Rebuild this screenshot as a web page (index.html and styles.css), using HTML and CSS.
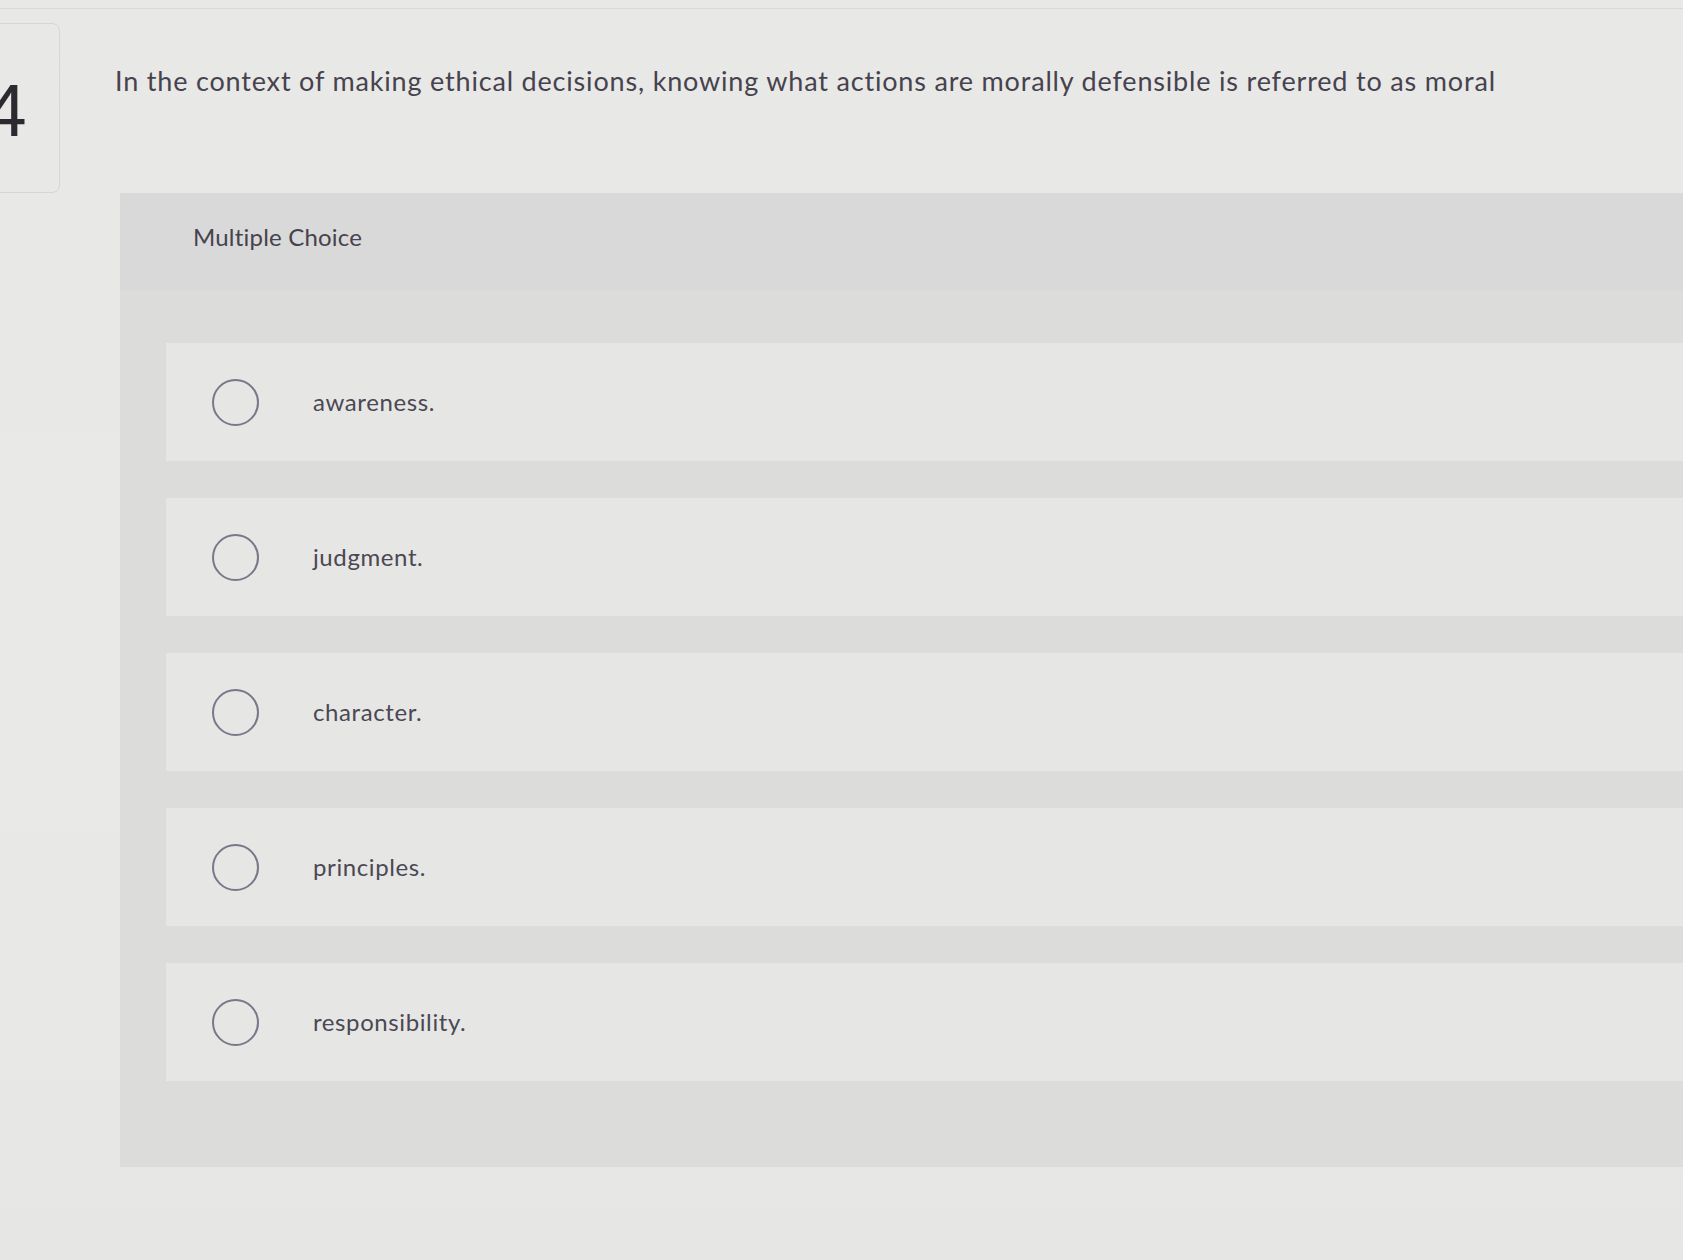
FILE: index.html
```html
<!DOCTYPE html>
<html lang="en">
<head>
<meta charset="utf-8">
<title>Question 4</title>
<link rel="stylesheet" href="styles.css">
</head>
<body>
<div class="page">
  <div class="question">
    <div class="qnum"><span>4</span></div>
    <p class="prompt">In the context of making ethical decisions, knowing what actions are morally defensible is referred to as moral</p>
  </div>
  <section class="panel">
    <header class="panel-head">Multiple Choice</header>
    <ul class="options">
      <li class="option"><span class="radio"></span><span class="label">awareness.</span></li>
      <li class="option"><span class="radio"></span><span class="label">judgment.</span></li>
      <li class="option"><span class="radio"></span><span class="label">character.</span></li>
      <li class="option"><span class="radio"></span><span class="label">principles.</span></li>
      <li class="option"><span class="radio"></span><span class="label">responsibility.</span></li>
    </ul>
  </section>
</div>
</body>
</html>
```

FILE: styles.css
```css
html, body {
  margin: 0;
  padding: 0;
}
body {
  width: 1683px;
  height: 1260px;
  overflow: hidden;
  background: linear-gradient(180deg, #e8e8e6 0%, #e9e9e7 60%, #e6e6e4 100%);
  font-family: Lato, "Open Sans", "Liberation Sans", sans-serif;
  color: #48444f;
}
.page {
  padding-top: 10px;
  border-top: 1px solid #d9d9d7;
  margin-top: 8px;
}
.question {
  display: flex;
  align-items: flex-start;
  height: 174px;
}
.qnum {
  width: 84px;
  height: 170px;
  margin-left: -24px;
  margin-top: 4px;
  box-sizing: border-box;
  border: 1px solid #d6d6d4;
  border-radius: 8px;
  display: flex;
  align-items: center;
  justify-content: center;
  flex-shrink: 0;
}
.qnum span {
  font-family: "Liberation Sans", sans-serif;
  font-size: 74px;
  line-height: 1;
  color: #2c2a30;
  margin-left: -24px;
  margin-top: 6px;
}
.prompt {
  margin: 46px 0 0 55px;
  font-size: 27px;
  line-height: 32px;
  letter-spacing: 0.82px;
  color: #46424e;
  white-space: nowrap;
}
.panel {
  margin-left: 120px;
  background: #dcdcdb;
  padding-bottom: 86px;
}
.panel-head {
  height: 97px;
  padding-left: 73px;
  display: flex;
  align-items: center;
  font-size: 24px;
  letter-spacing: 0.2px;
  color: #46424e;
  background: #d9d9d9;
  box-sizing: border-box;
  padding-bottom: 10px;
}
.options {
  list-style: none;
  margin: 0;
  padding: 53px 0 0 46px;
  display: flex;
  flex-direction: column;
  gap: 37px;
}
.option {
  height: 118px;
  background: #e6e6e5;
  display: flex;
  align-items: center;
  padding-left: 46px;
  gap: 54px;
}
.radio {
  width: 47px;
  height: 47px;
  box-sizing: border-box;
  border: 2px solid #7b7688;
  border-radius: 50%;
  flex-shrink: 0;
}
.label {
  font-size: 24px;
  color: #4b4853;
  letter-spacing: 0.6px;
  margin-top: -2px;
}
```
